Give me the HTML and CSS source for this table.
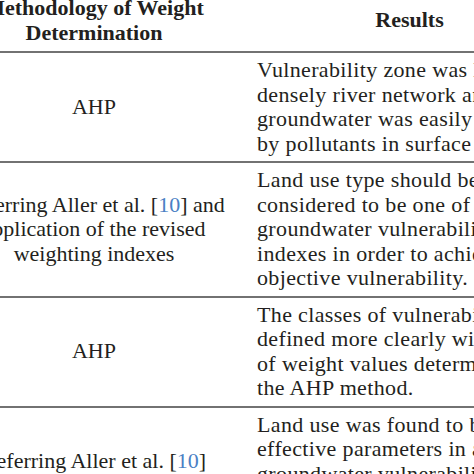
FILE: index.html
```html
<!DOCTYPE html>
<html lang="en">
<head>
<meta charset="utf-8">
<title>Table</title>
<link rel="stylesheet" href="styles.css">
</head>
<body>
<table class="tbl">
  <colgroup><col class="c-left"><col class="c-right"></colgroup>
  <thead>
    <tr>
      <th class="left">Methodology of Weight<br>Determination</th>
      <th class="right-h">Results</th>
    </tr>
  </thead>
  <tbody>
    <tr>
      <td class="left">AHP</td>
      <td class="right">Vulnerability zone was located in<br>densely river network and<br>groundwater was easily polluted<br>by pollutants in surface water.</td>
    </tr>
    <tr>
      <td class="left">Referring Aller et al. [<span class="ref">10</span>] and<br>application of the revised<br>weighting indexes</td>
      <td class="right">Land use type should be<br>considered to be one of the<br>groundwater vulnerability<br>indexes in order to achieve<br>objective vulnerability.</td>
    </tr>
    <tr>
      <td class="left">AHP</td>
      <td class="right">The classes of vulnerability were<br>defined more clearly with the help<br>of weight values determined by<br>the AHP method.</td>
    </tr>
    <tr>
      <td class="left">Referring Aller et al. [<span class="ref">10</span>]<br>and AHP</td>
      <td class="right">Land use was found to be one of the<br>effective parameters in assessing<br>groundwater vulnerability<br>in the study area and<br>should be considered.</td>
    </tr>
  </tbody>
</table>
</body>
</html>
```

FILE: styles.css
```css
html, body {
  margin: 0;
  padding: 0;
  overflow: hidden;
  background: #ffffff;
  width: 474px;
  height: 474px;
}
.tbl {
  border-collapse: collapse;
  table-layout: fixed;
  width: 631px;
  margin-left: -49px;
  margin-top: -9px;
  font-family: "Liberation Serif", "Times New Roman", serif;
  font-size: 22px;
  line-height: 24.5px;
  color: #231f20;
}
.c-left { width: 286px; }
.c-right { width: 345px; }
.tbl tr { border-bottom: 2px solid #727272; }
.tbl th {
  font-weight: bold;
  padding: 5px 0 6px 0;
  text-align: center;
  vertical-align: middle;
}
.tbl td {
  padding: 5px 0 5px 0;
  vertical-align: middle;
  white-space: nowrap;
}
.tbl .left { text-align: center; }
.tbl .right { text-align: left; padding-left: 20px; letter-spacing: 0.35px; }
.tbl .right-h { text-align: center; padding-left: 20px; padding-right: 20px; }
.ref { color: #4a80c4; }
```
